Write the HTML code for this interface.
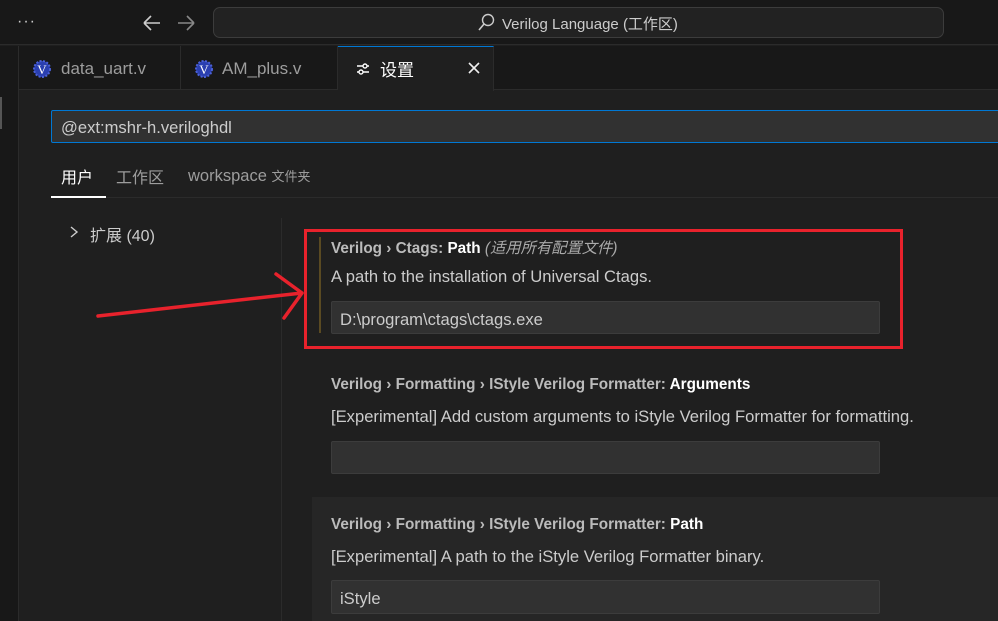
<!DOCTYPE html>
<html><head><meta charset="utf-8"><style>
*{margin:0;padding:0;box-sizing:border-box}
body{width:998px;height:621px;overflow:hidden;background:#1f1f1f;font-family:"Liberation Sans","Noto Sans CJK SC",sans-serif;color:#ccc;position:relative}
.abs{position:absolute;white-space:nowrap}
.cn{font-family:"Liberation Sans","Noto Sans CJK SC",sans-serif}
.d{font-size:16.6px}
.h{font-size:15.3px}
</style></head><body>
<div class="abs" style="left:0;top:0;width:998px;height:45px;background:#181818;border-bottom:1px solid #2b2b2b"></div>
<div class="abs" style="left:17px;top:13px;font-size:16px;color:#ccc;letter-spacing:1px">···</div>
<svg class="abs" style="left:140px;top:12px" width="60" height="22"><path d="M4 11H20M4 11L11 4M4 11L11 18" stroke="#ccc" stroke-width="1.6" fill="none"/><path d="M38 11H54M54 11L47 4M54 11L47 18" stroke="#888" stroke-width="1.6" fill="none"/></svg>
<div class="abs" style="left:213px;top:7px;width:731px;height:31px;border:1px solid #3c3c3c;border-radius:7px;background:#222"></div>
<svg class="abs" style="left:477px;top:12px" width="20" height="20"><circle cx="11" cy="8" r="5.5" stroke="#ccc" stroke-width="1.4" fill="none"/><path d="M7 12L2 18" stroke="#ccc" stroke-width="1.6"/></svg>
<div class="abs cn" style="left:502px;top:13px;font-size:15px;color:#ccc">Verilog Language (工作区)</div>
<div class="abs" style="left:0;top:46px;width:19px;height:575px;background:#181818;border-right:1px solid #2b2b2b"></div>
<div class="abs" style="left:0;top:97px;width:2px;height:32px;background:#555"></div>
<div class="abs" style="left:19px;top:46px;width:979px;height:44px;background:#181818;border-bottom:1px solid #2b2b2b"></div>
<div class="abs" style="left:19px;top:46px;width:162px;height:44px;border-right:1px solid #2b2b2b"></div>
<div class="abs" style="left:181px;top:46px;width:157px;height:44px;border-right:1px solid #2b2b2b"></div>
<div class="abs" style="left:338px;top:46px;width:156px;height:45px;background:#1f1f1f;border-top:1px solid #0078d4;border-right:1px solid #2b2b2b"></div>
<svg class="abs" style="left:32px;top:58px" width="20" height="22"><circle cx="10" cy="11" r="8" fill="#2a3fb0" stroke="#4a60d8" stroke-dasharray="2 1.5" stroke-width="2"/><text x="10" y="16" font-size="13" font-family="Liberation Serif" fill="#fff" text-anchor="middle">V</text></svg>
<div class="abs" style="left:61px;top:59px;font-size:17px;color:#9d9d9d">data_uart.v</div>
<svg class="abs" style="left:194px;top:58px" width="20" height="22"><circle cx="10" cy="11" r="8" fill="#2a3fb0" stroke="#4a60d8" stroke-dasharray="2 1.5" stroke-width="2"/><text x="10" y="16" font-size="13" font-family="Liberation Serif" fill="#fff" text-anchor="middle">V</text></svg>
<div class="abs" style="left:222px;top:59px;font-size:17px;color:#9d9d9d">AM_plus.v</div>
<svg class="abs" style="left:355px;top:61px" width="16" height="16"><path d="M2 5H14M2 11H14" stroke="#fff" stroke-width="1.4"/><circle cx="10" cy="5" r="2" fill="#1f1f1f" stroke="#fff" stroke-width="1.4"/><circle cx="6" cy="11" r="2" fill="#1f1f1f" stroke="#fff" stroke-width="1.4"/></svg>
<div class="abs cn" style="left:380px;top:56px;font-size:17px;color:#fff">设置</div>
<svg class="abs" style="left:467px;top:61px" width="14" height="14"><path d="M2 2L12 12M12 2L2 12" stroke="#eee" stroke-width="1.6"/></svg>
<div class="abs" style="left:51px;top:110px;width:960px;height:33px;background:#313131;border:1px solid #0078d4;border-radius:2px"></div>
<div class="abs" style="left:61px;top:118px;font-size:16.6px;color:#ccc">@ext:mshr-h.veriloghdl</div>
<div class="abs cn" style="left:61px;top:164px;font-size:16px;color:#fff">用户</div>
<div class="abs cn" style="left:116px;top:164px;font-size:16px;color:#9d9d9d">工作区</div>
<div class="abs cn" style="left:188px;top:166px;font-size:16.5px;color:#9d9d9d">workspace <span style="font-size:13px">文件夹</span></div>
<div class="abs" style="left:51px;top:197px;width:947px;height:1px;background:#2b2b2b"></div>
<div class="abs" style="left:51px;top:196px;width:55px;height:2px;background:#fff"></div>
<svg class="abs" style="left:68px;top:225px" width="12" height="14"><path d="M3 2L9 7L3 12" stroke="#ccc" stroke-width="1.4" fill="none"/></svg>
<div class="abs cn" style="left:90px;top:222px;font-size:16px;color:#ccc">扩展 (40)</div>
<div class="abs" style="left:281px;top:218px;width:1px;height:403px;background:#2b2b2b"></div>
<div class="abs" style="left:312px;top:497px;width:686px;height:124px;background:#262626"></div>
<div class="abs" style="left:319px;top:237px;width:2px;height:96px;background:#5a4a22"></div>
<div class="abs cn h" style="left:331px;top:236px;color:#bbb;font-weight:bold">Verilog › Ctags: <span style="color:#fff">Path</span> <span style="font-weight:normal;font-style:italic;color:#aaa">(适用所有配置文件)</span></div>
<div class="abs d" style="left:331px;top:267px;color:#ccc">A path to the installation of Universal Ctags.</div>
<div class="abs" style="left:331px;top:301px;width:549px;height:33px;background:#313131;border:1px solid #3c3c3c;border-radius:2px"></div>
<div class="abs d" style="left:340px;top:310px;color:#ccc">D:\program\ctags\ctags.exe</div>
<div class="abs h" style="left:331px;top:376px;color:#bbb;font-weight:bold">Verilog › Formatting › IStyle Verilog Formatter: <span style="color:#fff">Arguments</span></div>
<div class="abs d" style="left:331px;top:407px;color:#ccc">[Experimental] Add custom arguments to iStyle Verilog Formatter for formatting.</div>
<div class="abs" style="left:331px;top:441px;width:549px;height:33px;background:#313131;border:1px solid #3c3c3c;border-radius:2px"></div>
<div class="abs h" style="left:331px;top:516px;color:#bbb;font-weight:bold">Verilog › Formatting › IStyle Verilog Formatter: <span style="color:#fff">Path</span></div>
<div class="abs d" style="left:331px;top:547px;color:#ccc">[Experimental] A path to the iStyle Verilog Formatter binary.</div>
<div class="abs" style="left:331px;top:580px;width:549px;height:34px;background:#313131;border:1px solid #3c3c3c;border-radius:2px"></div>
<div class="abs d" style="left:340px;top:589px;color:#ccc">iStyle</div>
<div class="abs" style="left:304px;top:229px;width:599px;height:120px;border:3.5px solid #e8222c"></div>
<svg class="abs" style="left:0;top:0" width="998" height="621"><path d="M98 316L302 293M276 274L302 293L284 318" stroke="#e8222c" stroke-width="3.5" fill="none" stroke-linecap="round" stroke-linejoin="round"/></svg>
</body></html>
